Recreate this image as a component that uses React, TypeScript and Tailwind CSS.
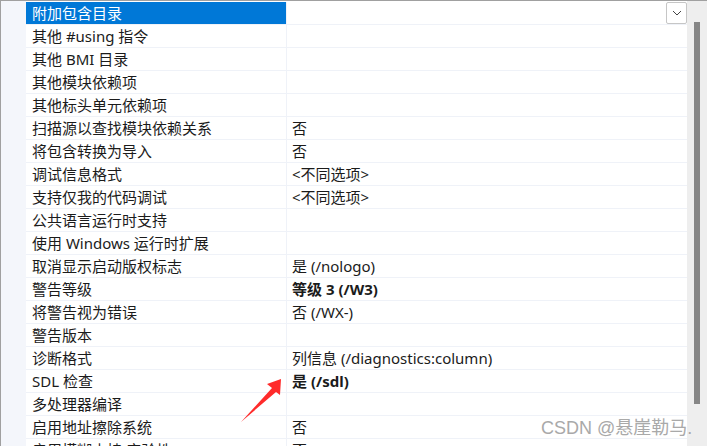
import React from 'react';

type Row = { name: string; value?: string; bold?: boolean };

const rows: Row[] = [
  { name: '附加包含目录' },
  { name: '其他 #using 指令' },
  { name: '其他 BMI 目录' },
  { name: '其他模块依赖项' },
  { name: '其他标头单元依赖项' },
  { name: '扫描源以查找模块依赖关系', value: '否' },
  { name: '将包含转换为导入', value: '否' },
  { name: '调试信息格式', value: '<不同选项>' },
  { name: '支持仅我的代码调试', value: '<不同选项>' },
  { name: '公共语言运行时支持' },
  { name: '使用 Windows 运行时扩展' },
  { name: '取消显示启动版权标志', value: '是 (/nologo)' },
  { name: '警告等级', value: '等级 3 (/W3)', bold: true },
  { name: '将警告视为错误', value: '否 (/WX-)' },
  { name: '警告版本' },
  { name: '诊断格式', value: '列信息 (/diagnostics:column)' },
  { name: 'SDL 检查', value: '是 (/sdl)', bold: true },
  { name: '多处理器编译' },
  { name: '启用地址擦除系统', value: '否' },
  { name: '启用模糊支持(实验性)', value: '否' },
];

const font = { fontFamily: '"Noto Sans", "Noto Sans CJK SC", sans-serif' };

export default function App() {
  return (
    <div
      className="relative w-[707px] h-[446px] overflow-hidden bg-white border-t border-[#a0a0a0] text-[15px] text-[#1b1b1b]"
      style={font}
    >
      <div className="flex h-full">
        {/* left margin strip */}
        <div className="w-[26px] shrink-0 bg-[#f4f6fb] border-l border-[#a0a0a0]" />

        {/* property grid */}
        <div className="w-[661px] shrink-0 pt-[1px]">
          {rows.map((r, i) => {
            const selected = i === 0;
            return (
              <div key={r.name} className="flex h-[23px] border-b border-[#eff2f8]">
                <div
                  className={
                    'w-[260px] shrink-0 flex items-center pl-[6px] whitespace-nowrap ' +
                    (selected ? 'bg-[#0078d7] text-white' : '')
                  }
                >
                  {r.name}
                </div>
                <div className="w-px shrink-0 bg-[#eff2f8]" />
                <div className="flex-1 flex items-center pl-[5px] whitespace-nowrap">
                  <span className={r.bold ? 'font-bold' : ''}>{r.value}</span>
                  {selected && (
                    <div className="ml-auto w-[21px] h-[22px] border border-[#c6c6c6] rounded-[2px] flex items-center justify-center">
                      <svg width="10" height="6" viewBox="0 0 10 6">
                        <path d="M1 1 L5 5 L9 1" fill="none" stroke="#444" strokeWidth="1" />
                      </svg>
                    </div>
                  )}
                </div>
              </div>
            );
          })}
        </div>

        {/* scrollbar */}
        <div className="w-[20px] shrink-0 bg-[#eeeeee] pt-[21px]">
          <div className="ml-[7px] w-[6px] h-[382px] bg-[#868686]" />
        </div>
      </div>

      {/* red arrow annotation */}
      <svg className="absolute left-0 top-0 pointer-events-none" width="707" height="446">
        <polygon points="281,378 267,383 272,387 241,421 276,391 280,394" fill="#ff2b2b" />
      </svg>

      {/* watermark */}
      <div
        className="absolute left-[541px] top-[416px] text-[18px] leading-[22px] text-[#a9a9a9] whitespace-nowrap"
        style={{ fontFamily: '"Liberation Sans", "Noto Sans CJK SC", sans-serif' }}
      >
        CSDN @悬崖勒马.
      </div>
    </div>
  );
}
